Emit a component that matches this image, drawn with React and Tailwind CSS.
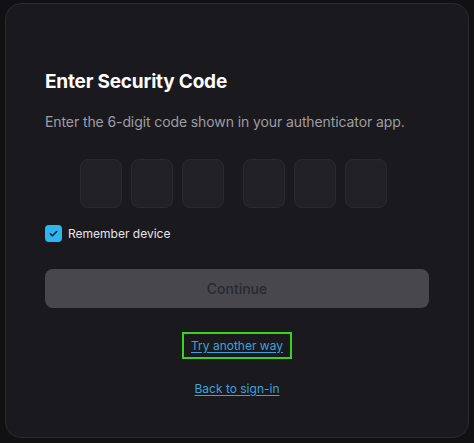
import React, { useState } from 'react'

const CodeBox = () => (
    <div className="w-[42px] h-[49px] rounded-lg bg-[#212025] border border-[#2a292f]" />
)

const App = () => {
    const [remember, setRemember] = useState(true);

    return (
        <div className="min-h-[443px] bg-[#111114] px-[5px] pt-[3px] pb-[5px] font-['Inter',sans-serif]">
            <div className="h-[435px] rounded-2xl bg-[#1a191e] border border-[#2a292f] px-[39px] pt-[64px]">
                <h1 className="text-[19px] leading-[28px] font-bold text-white tracking-[-0.2px]">Enter Security Code</h1>
                <p className="mt-[16px] text-[14px] leading-[20px] text-[#9e9da4] tracking-[-0.1px] whitespace-nowrap">Enter the 6-digit code shown in your authenticator app.</p>

                <div className="mt-[27px] flex justify-center gap-[19px] pr-[8px]">
                    <div className="flex gap-[9px]">
                        <CodeBox />
                        <CodeBox />
                        <CodeBox />
                    </div>
                    <div className="flex gap-[9px]">
                        <CodeBox />
                        <CodeBox />
                        <CodeBox />
                    </div>
                </div>

                <label className="mt-[17px] flex items-center gap-[6px] cursor-pointer">
                    <button
                        type="button"
                        onClick={() => setRemember(!remember)}
                        className="w-[17px] h-[17px] rounded-[4px] bg-[#2fb6f0] flex items-center justify-center"
                    >
                        {remember &&
                            <svg width="11" height="11" viewBox="0 0 24 24" fill="none" stroke="#0b1a24" strokeWidth="3.2" strokeLinecap="round" strokeLinejoin="round">
                                <path d="M5 12.5l4.5 4.5L19 7.5" />
                            </svg>
                        }
                    </button>
                    <span className="text-[12px] leading-[17px] text-[#e6e6ea]">Remember device</span>
                </label>

                <button className="mt-[27px] w-full h-[39px] rounded-lg bg-[#48474d] text-[14px] text-[#2a292f] font-medium">
                    Continue
                </button>

                <div className="mt-[24px] flex justify-center">
                    <a href="#" className="px-[7px] py-[3.5px] border-2 border-[#3bd11f] text-[12px] leading-[16px] text-[#3ba3dc] underline underline-offset-2">
                        Try another way
                    </a>
                </div>

                <div className="mt-[22px] flex justify-center">
                    <a href="#" className="text-[12px] leading-[16px] text-[#3ba3dc] underline underline-offset-2">
                        Back to sign-in
                    </a>
                </div>
            </div>
        </div>
    )
}

export default App
